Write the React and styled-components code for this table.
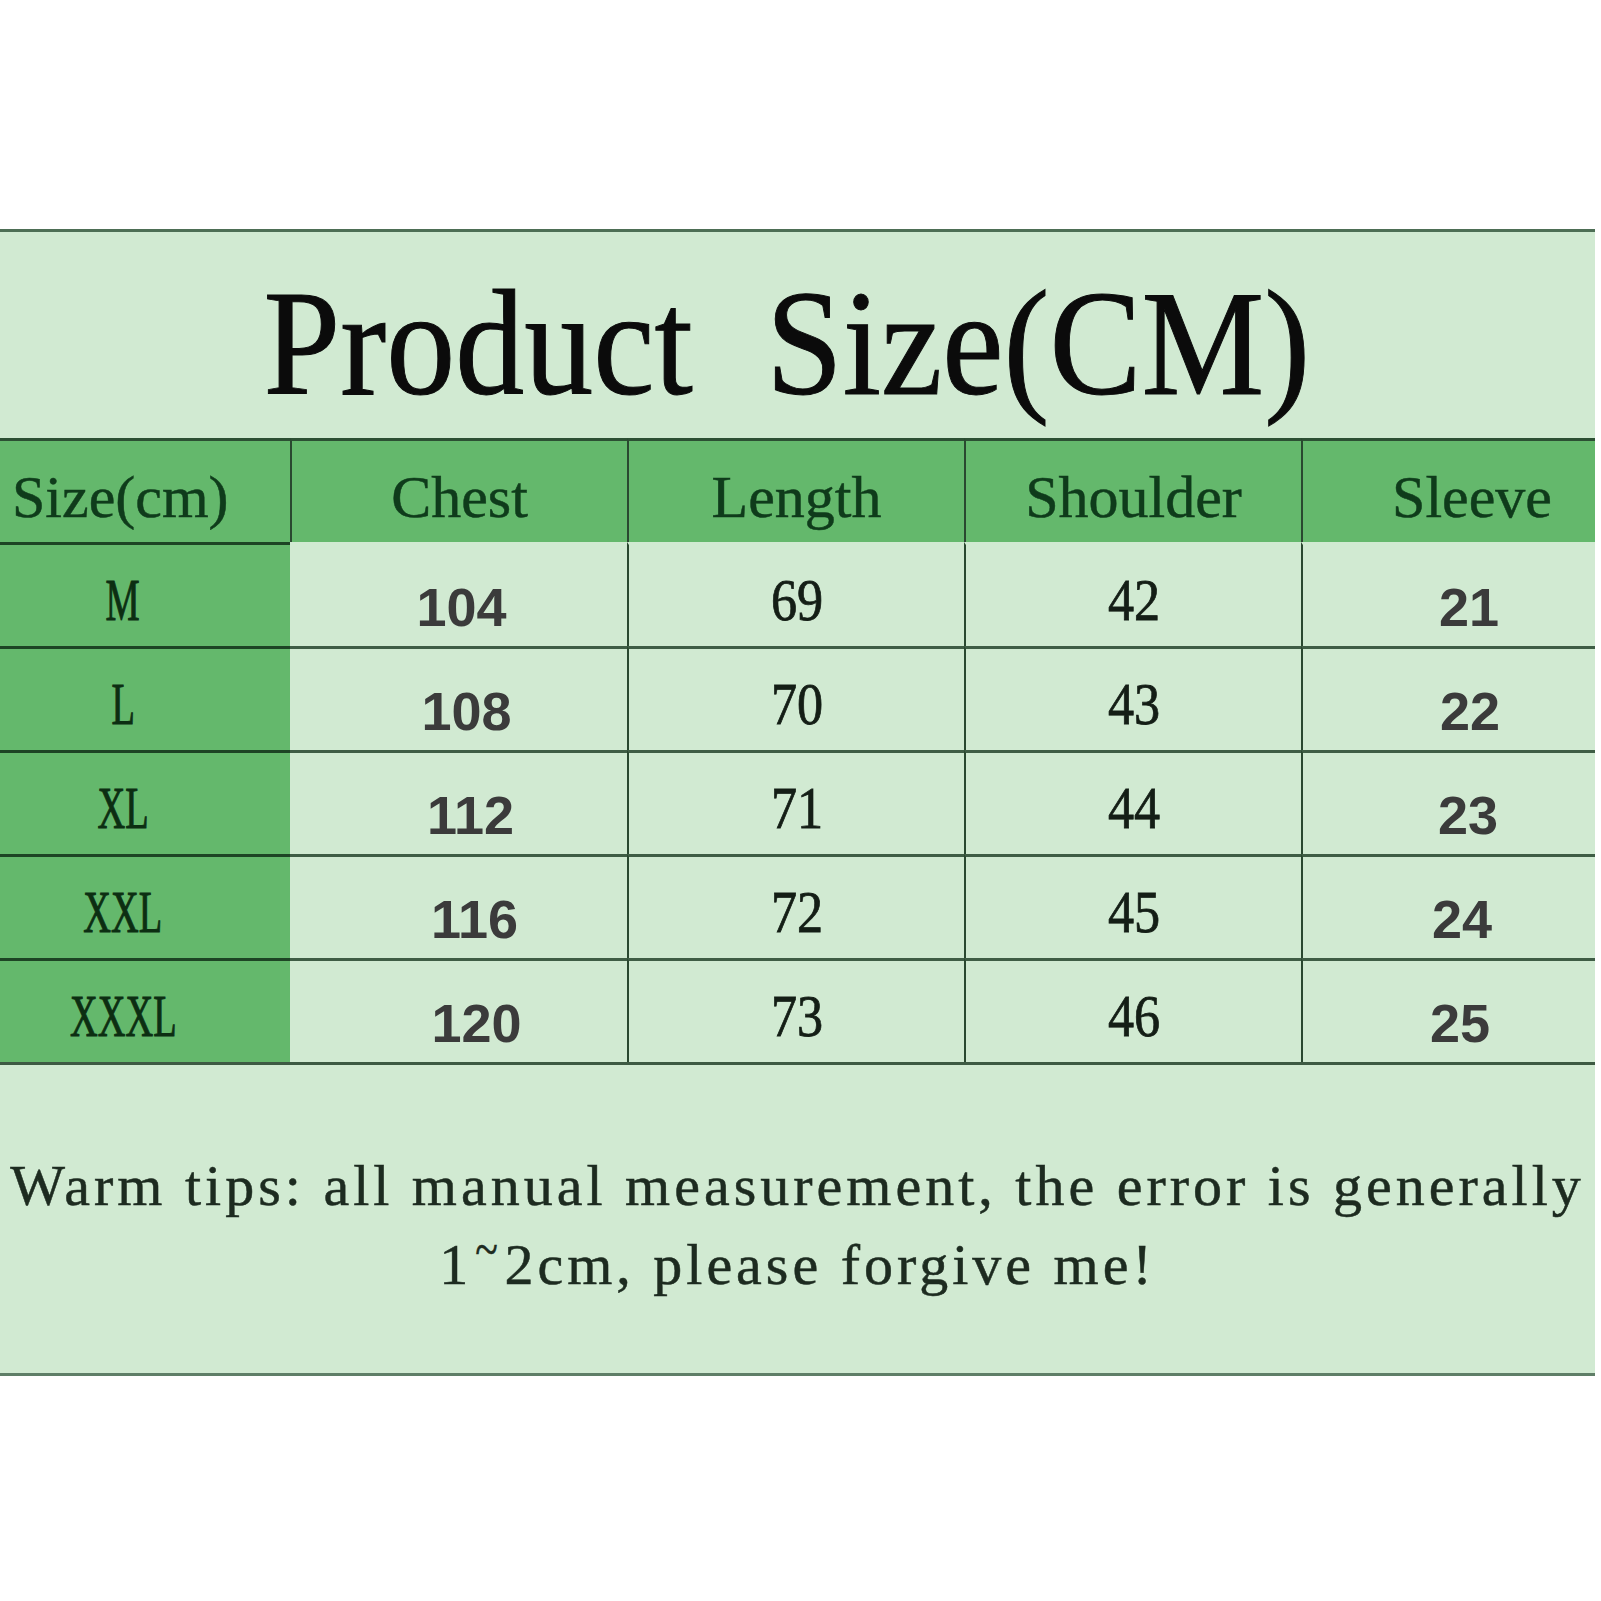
import React from "react";
import styled, { createGlobalStyle, css } from "styled-components";

const GlobalStyle = createGlobalStyle`
  body {
    margin: 0;
    background: #ffffff;
  }
`;

const LIGHT = "#d1ead2";
const GREEN = "#64b86c";

const sizes = [
  { size: "M", chest: "104", length: "69", shoulder: "42", sleeve: "21", cx: 3, sx: 20 },
  { size: "L", chest: "108", length: "70", shoulder: "43", sleeve: "22", cx: 8, sx: 21 },
  { size: "XL", chest: "112", length: "71", shoulder: "44", sleeve: "23", cx: 12, sx: 19 },
  { size: "XXL", chest: "116", length: "72", shoulder: "45", sleeve: "24", cx: 16, sx: 13 },
  { size: "XXXL", chest: "120", length: "73", shoulder: "46", sleeve: "25", cx: 18, sx: 11 },
];

const Page = styled.div`
  width: 1601px;
  padding-top: 229px;
  padding-bottom: 225px;
`;

const Panel = styled.section`
  width: 1595px;
  background: ${LIGHT};
  border-top: 3px solid #4d6e55;
  border-bottom: 3px solid #5f7e67;
`;

const TitleBar = styled.header`
  box-sizing: border-box;
  height: 206px;
  padding: 36px 22px 0 0;
  display: flex;
  justify-content: center;
  align-items: flex-start;
`;

const Title = styled.h1`
  margin: 0;
  font-family: "Liberation Serif", "Times New Roman", serif;
  font-weight: 400;
  font-size: 150px;
  line-height: 1;
  word-spacing: 42px;
  color: #0b0b0b;
  white-space: nowrap;
  -webkit-text-stroke: 1px #0b0b0b;
  transform: scaleX(0.92);
`;

const Table = styled.div`
  display: grid;
  grid-template-columns: 290px 337px 337px 337px 294px;
  border-bottom: 3px solid #3d5a43;
`;

const cellBase = css`
  box-sizing: border-box;
  height: 104px;
  border-top: 3px solid #2f4f36;
  display: flex;
  align-items: center;
  justify-content: center;
  white-space: nowrap;
  border-left: ${(p) => (p.$divider ? "2px solid #2a4830" : "none")};
`;

const HeadCell = styled.div`
  ${cellBase};
  background: ${GREEN};
  border-top-color: #2c4f33;
  color: #0f3b1b;
  font-family: "Liberation Serif", "Times New Roman", serif;
  font-size: 60px;
  line-height: 1;
  padding-top: 11px;
  padding-left: ${(p) => p.$pl || 0}px;
  justify-content: ${(p) => (p.$left ? "flex-start" : "center")};
  -webkit-text-stroke: 0.5px #0f3b1b;
`;

const LabelCell = styled.div`
  ${cellBase};
  background: ${GREEN};
  border-top-color: #1d4424;
  color: #0c2e12;
  font-family: "Liberation Serif", "Times New Roman", serif;
  font-size: 60px;
  line-height: 1;
  padding-top: 9px;
  padding-right: 44px;
  -webkit-text-stroke: 1px #0c2e12;
`;

const DataCell = styled.div`
  ${cellBase};
  background: ${LIGHT};
  border-top-color: ${(p) => (p.$first ? "transparent" : "#3f5d45")};
  line-height: 1;
  padding-left: ${(p) => (p.$shift || 0) * 2}px;
  ${(p) =>
    p.$bold
      ? css`
          font-family: "Liberation Sans", Arial, sans-serif;
          font-weight: 700;
          font-size: 54px;
          color: #3b3b3b;
          padding-top: 22px;
        `
      : css`
          font-family: "Liberation Serif", "Times New Roman", serif;
          font-size: 60px;
          color: #141e16;
          padding-top: 9px;
          -webkit-text-stroke: 0.8px #141e16;
        `}
`;

const Narrow = styled.span`
  display: inline-block;
  transform: scaleX(${(p) => p.$scale});
`;

const Tips = styled.div`
  box-sizing: border-box;
  height: 308px;
  padding-top: 12px;
  display: flex;
  align-items: center;
  justify-content: center;
`;

const TipText = styled.p`
  margin: 0;
  font-family: "Liberation Serif", "Times New Roman", serif;
  font-size: 58px;
  line-height: 79px;
  letter-spacing: 4px;
  color: #1d2b20;
  text-align: center;
  white-space: nowrap;
  -webkit-text-stroke: 0.5px #1d2b20;
`;

const Tilde = styled.span`
  display: inline-block;
  font-size: 0.9em;
  line-height: 1;
  transform: translateY(-0.32em) scaleX(0.8);
`;

export default function App() {
  return (
    <Page>
      <GlobalStyle />
      <Panel>
        <TitleBar>
          <Title>Product Size(CM)</Title>
        </TitleBar>
        <Table>
          <HeadCell $left $pl={12}>Size(cm)</HeadCell>
          <HeadCell $divider>Chest</HeadCell>
          <HeadCell $divider>Length</HeadCell>
          <HeadCell $divider>Shoulder</HeadCell>
          <HeadCell $divider $pl={46}>Sleeve</HeadCell>
          {sizes.map((row, i) => (
            <React.Fragment key={row.size}>
              <LabelCell>
                <Narrow $scale={0.64}>{row.size}</Narrow>
              </LabelCell>
              <DataCell $first={i === 0} $bold $shift={row.cx}>
                {row.chest}
              </DataCell>
              <DataCell $first={i === 0} $divider>
                <Narrow $scale={0.87}>{row.length}</Narrow>
              </DataCell>
              <DataCell $first={i === 0} $divider>
                <Narrow $scale={0.87}>{row.shoulder}</Narrow>
              </DataCell>
              <DataCell $first={i === 0} $divider $bold $shift={row.sx}>
                {row.sleeve}
              </DataCell>
            </React.Fragment>
          ))}
        </Table>
        <Tips>
          <TipText>
            Warm tips: all manual measurement, the error is generally
            <br />1<Tilde>~</Tilde>2cm, please forgive me!
          </TipText>
        </Tips>
      </Panel>
    </Page>
  );
}
